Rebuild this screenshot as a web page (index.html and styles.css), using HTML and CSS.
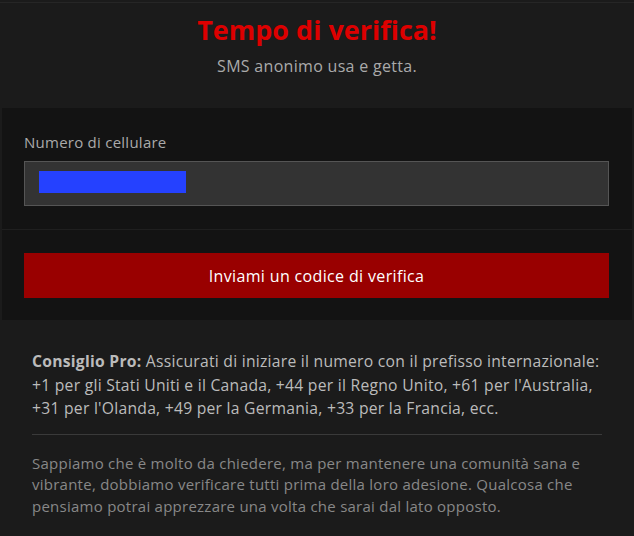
FILE: index.html
```
<!DOCTYPE html>
<html lang="it">
<head>
<meta charset="utf-8">
<title>Tempo di verifica!</title>
<link rel="stylesheet" href="styles.css">
</head>
<body>
<div class="page">
  <header class="header">
    <h1 class="title">Tempo di verifica!</h1>
    <p class="subtitle">SMS anonimo usa e getta.</p>
  </header>
  <section class="form">
    <div class="field">
      <label class="label" for="phone">Numero di cellulare</label>
      <div class="input" id="phone"><span class="mask"></span></div>
    </div>
    <div class="actions">
      <button class="btn" type="button">Inviami un codice di verifica</button>
    </div>
  </section>
  <section class="info">
    <p class="tip"><strong>Consiglio Pro:</strong> Assicurati di iniziare il numero con il prefisso internazionale: +1 per gli Stati Uniti e il Canada, +44 per il Regno Unito, +61 per l'Australia, +31 per l'Olanda, +49 per la Germania, +33 per la Francia, ecc.</p>
    <hr class="rule">
    <p class="note">Sappiamo che è molto da chiedere, ma per mantenere una comunità sana e vibrante, dobbiamo verificare tutti prima della loro adesione. Qualcosa che pensiamo potrai apprezzare una volta che sarai dal lato opposto.</p>
  </section>
</div>
</body>
</html>
```
FILE: styles.css
```
html, body {
  margin: 0;
  padding: 0;
  background: #1b1b1b;
}
body {
  font-family: "Open Sans", "Noto Sans", sans-serif;
  width: 634px;
  height: 536px;
  overflow: hidden;
}
.page {
  border-top: 1px solid #262626;
  margin-top: 2px;
}
.header {
  height: 105px;
  box-sizing: border-box;
  padding-top: 10px;
  text-align: center;
}
.title {
  margin: 0;
  font-size: 27px;
  line-height: 34px;
  font-weight: 700;
  color: #dd0000;
}
.subtitle {
  margin: 9px 0 0;
  font-size: 16px;
  line-height: 20px;
  letter-spacing: 0.3px;
  color: #aaaaaa;
}
.form {
  margin: 0 2px;
  background: #131313;
}
.field {
  padding: 24px 23px 23px 22px;
  border-bottom: 1px solid #1f1f1f;
}
.label {
  display: block;
  font-size: 15px;
  line-height: 20px;
  letter-spacing: 0.25px;
  color: #aaaaaa;
  margin-bottom: 9px;
}
.input {
  box-sizing: border-box;
  height: 45px;
  background: #333333;
  border: 1px solid #555555;
  padding: 9px 14px;
}
.mask {
  display: block;
  width: 147px;
  height: 22px;
  background: #2541ff;
}
.actions {
  padding: 23px 23px 22px 22px;
}
.btn {
  display: block;
  width: 100%;
  height: 45px;
  border: 0;
  background: #990000;
  color: #ffffff;
  font-family: inherit;
  font-size: 16px;
  letter-spacing: 0.35px;
}
.info {
  padding: 30px 32px 0;
}
.tip {
  margin: 0;
  font-size: 15.7px;
  line-height: 23.5px;
  letter-spacing: 0.25px;
  color: #bbbbbb;
}
.tip strong {
  font-weight: 700;
}
.rule {
  border: 0;
  border-top: 1px solid #3a3a3a;
  margin: 13px 0 18px;
}
.note {
  margin: 0;
  font-size: 15px;
  line-height: 21.5px;
  letter-spacing: 0.25px;
  color: #888888;
}
```
